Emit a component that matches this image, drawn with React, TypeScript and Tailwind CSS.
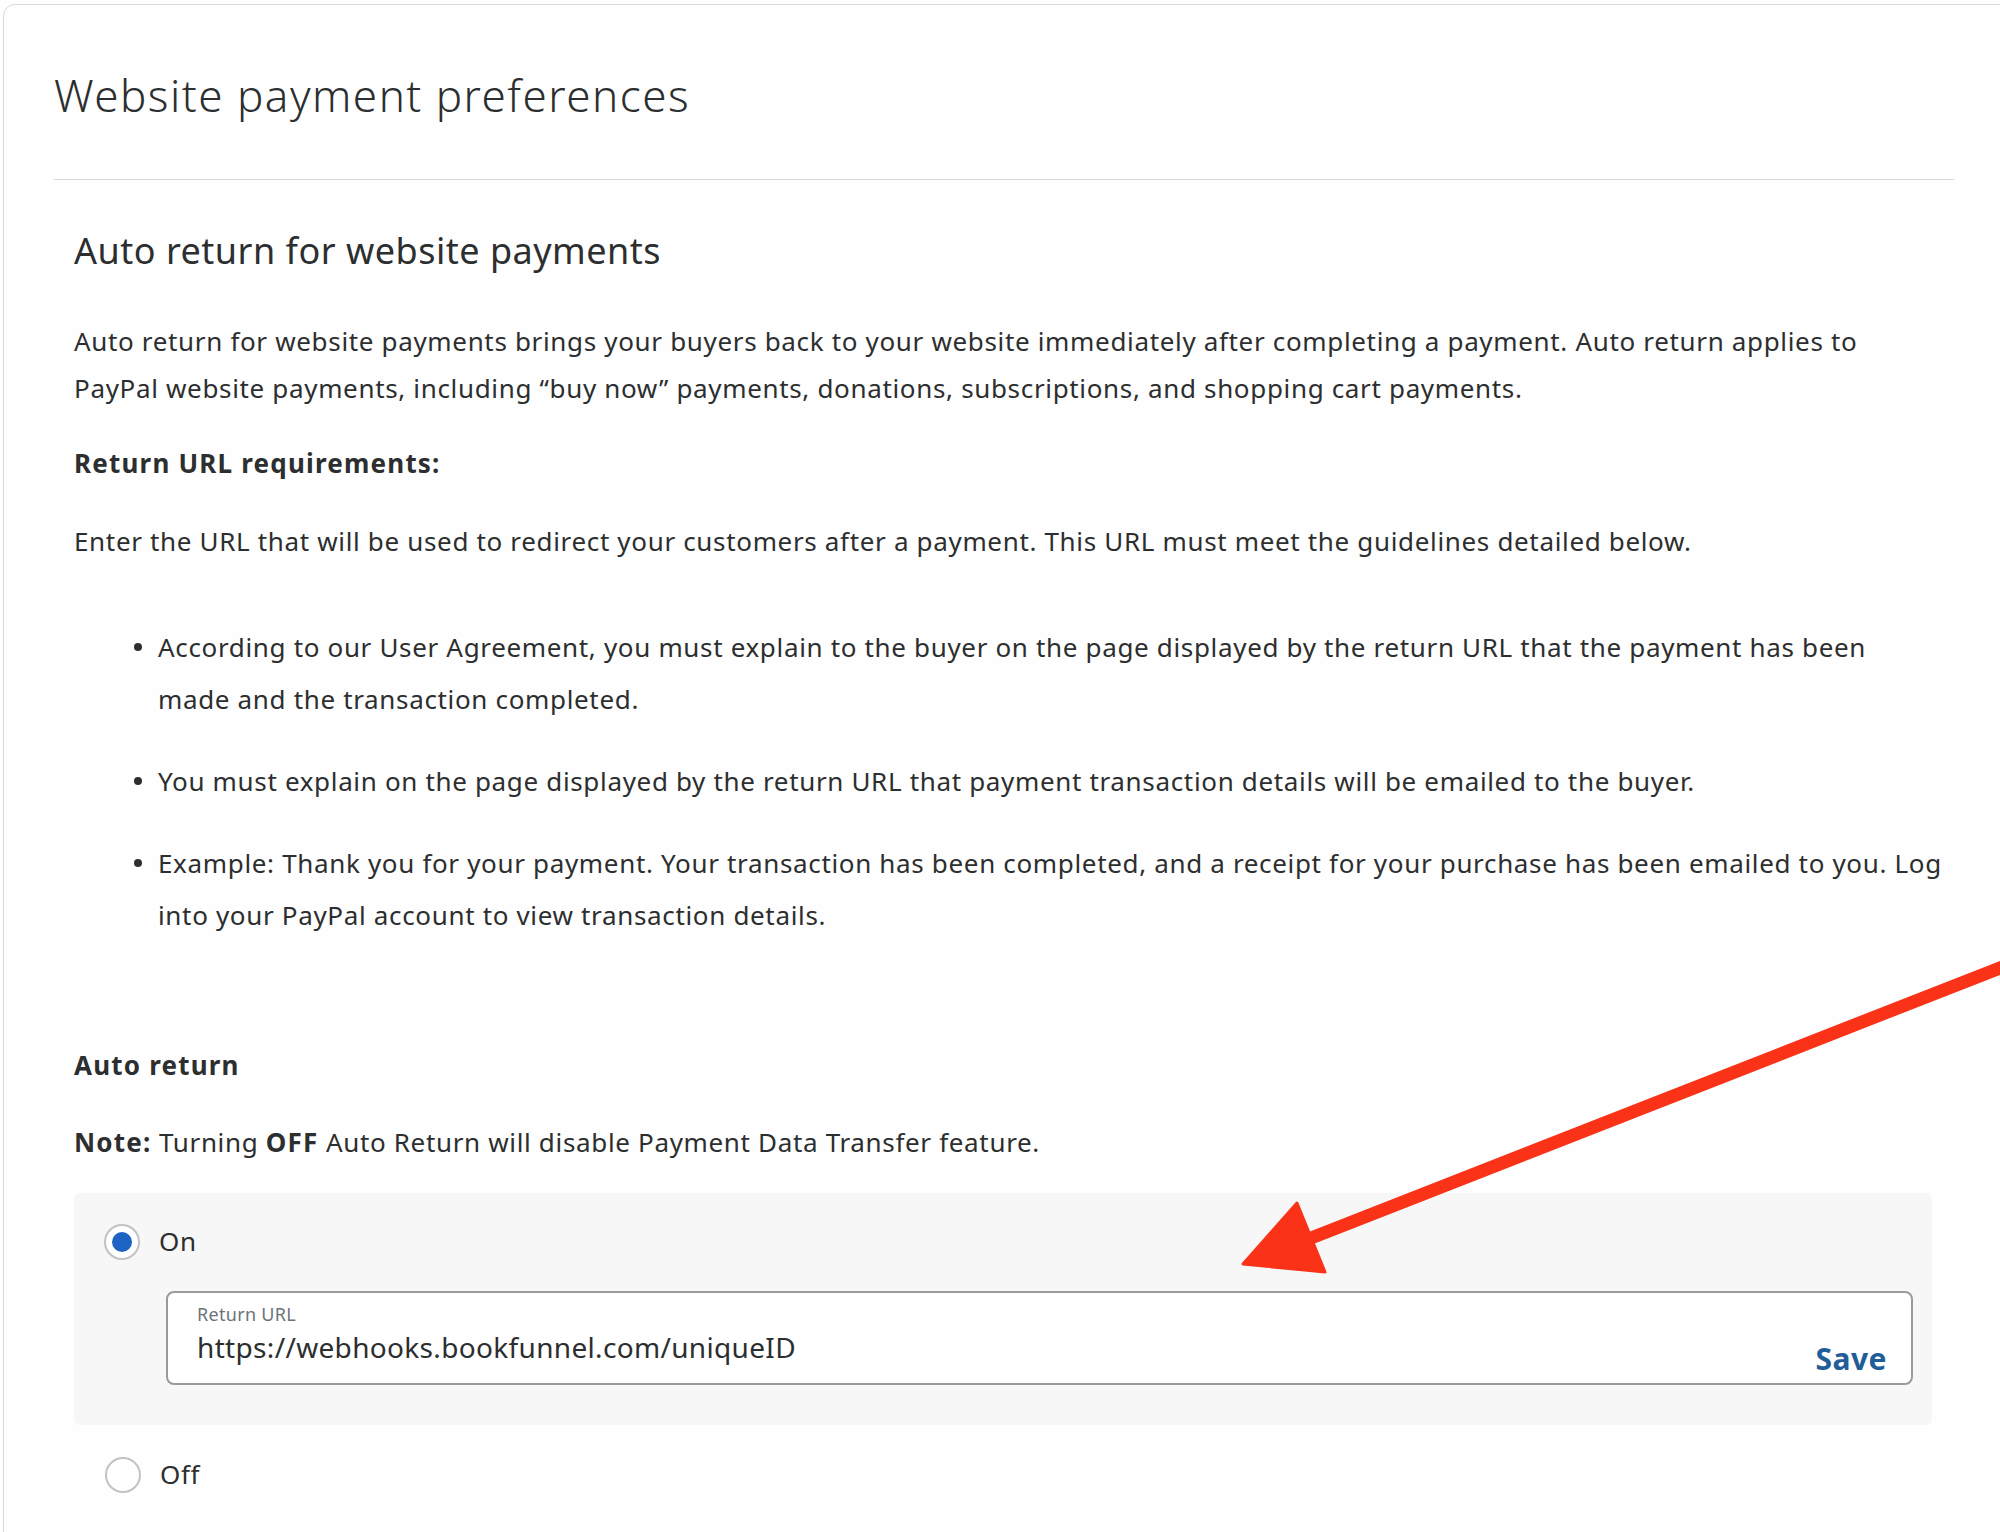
const body = "font-['Noto_Sans','Liberation_Sans',sans-serif] text-[26px] leading-[47px] tracking-[0.66px] text-[#2c2e2f]";

function Radio({ checked }: { checked: boolean }) {
  return (
    <span className="flex h-[36px] w-[36px] shrink-0 items-center justify-center rounded-full border-2 border-[#c2c2c2] bg-white">
      {checked && <span className="h-[20px] w-[20px] rounded-full bg-[#1d63c3]" />}
    </span>
  );
}

function Arrow() {
  return (
    <svg className="pointer-events-none absolute inset-0" width="2000" height="1532" viewBox="0 0 2000 1532">
      <line x1="2010" y1="964" x2="1306" y2="1240" stroke="#fa3218" strokeWidth="13" strokeLinecap="round" />
      <polygon points="1243,1264 1297,1203 1325,1272" fill="#fa3218" strokeLinejoin="round" stroke="#fa3218" strokeWidth="3" />
    </svg>
  );
}

function App() {
  return (
    <div className="relative h-[1532px] w-[2000px] overflow-hidden bg-[#fefefe]">
      <div className="ml-[3px] mt-[4px] h-[1600px] w-[2100px] rounded-tl-[12px] border border-[#dadada] bg-[#fefefe] pl-[50px] pt-[64px]">
        <h1 className="font-['Noto_Sans','Liberation_Sans',sans-serif] text-[44px] leading-[53px] font-light tracking-[1.5px] text-[#2c2e2f]">
          Website payment preferences
        </h1>
        <hr className="mt-[57px] w-[1900px] border-t border-[#d6d6d6]" />

        <section className="w-[1878px] pl-[20px]">
          <h2 className="mt-[49px] font-['Noto_Sans','Liberation_Sans',sans-serif] text-[36px] leading-[44px] tracking-[0.5px] text-[#2c2e2f]">
            Auto return for website payments
          </h2>

          <p className={`mt-[45px] whitespace-nowrap ${body}`}>
            Auto return for website payments brings your buyers back to your website immediately after completing a payment. Auto return applies to
            <br />
            PayPal website payments, including “buy now” payments, donations, subscriptions, and shopping cart payments.
          </p>

          <p className={`mt-[28px] font-bold tracking-[1.2px] ${body}`}>Return URL requirements:</p>

          <p className={`mt-[31px] whitespace-nowrap ${body}`}>
            Enter the URL that will be used to redirect your customers after a payment. This URL must meet the guidelines detailed below.
          </p>

          <ul className={`mt-[56px] flex flex-col gap-[30px] pl-[84px] ${body} leading-[52px]`}>
            <li className="relative whitespace-nowrap">
              <span className="absolute left-[-24px] top-[22px] h-[8px] w-[8px] rounded-full bg-[#2c2e2f]" />
              According to our User Agreement, you must explain to the buyer on the page displayed by the return URL that the payment has been
              <br />
              made and the transaction completed.
            </li>
            <li className="relative whitespace-nowrap">
              <span className="absolute left-[-24px] top-[22px] h-[8px] w-[8px] rounded-full bg-[#2c2e2f]" />
              You must explain on the page displayed by the return URL that payment transaction details will be emailed to the buyer.
            </li>
            <li className="relative whitespace-nowrap">
              <span className="absolute left-[-24px] top-[22px] h-[8px] w-[8px] rounded-full bg-[#2c2e2f]" />
              Example: Thank you for your payment. Your transaction has been completed, and a receipt for your purchase has been emailed to you. Log
              <br />
              into your PayPal account to view transaction details.
            </li>
          </ul>

          <p className={`mt-[101px] font-bold tracking-[1.2px] ${body}`}>Auto return</p>

          <p className={`mt-[30px] ${body}`}>
            <span className="font-bold tracking-[1.2px]">Note:</span> Turning <span className="font-bold tracking-[1.2px]">OFF</span> Auto Return will
            disable Payment Data Transfer feature.
          </p>

          <div className="mt-[27px] rounded-[6px] bg-[#f7f7f7] pb-[40px] pl-[30px] pr-[19px] pt-[25px]">
            <label className={`flex items-center gap-[19px] ${body}`}>
              <Radio checked />
              <span>On</span>
            </label>

            <div className="ml-[62px] mt-[26px] flex h-[94px] items-end justify-between rounded-[8px] border-2 border-[#9a9a9a] bg-white pb-[6px] pl-[29px] pr-[24px] pt-[10px]">
              <div className="flex h-full flex-col">
                <span className="font-['Noto_Sans','Liberation_Sans',sans-serif] text-[18px] leading-[22px] tracking-[0.3px] text-[#6c7378]">
                  Return URL
                </span>
                <span className="mt-[5px] font-['Noto_Sans','Liberation_Sans',sans-serif] text-[28px] leading-[34px] tracking-[0.33px] text-[#2c2e2f]">
                  https://webhooks.bookfunnel.com/uniqueID
                </span>
              </div>
              <button className="font-['Noto_Sans','Liberation_Sans',sans-serif] text-[30px] leading-[36px] font-bold tracking-[0.5px] text-[#1f5e98]">
                Save
              </button>
            </div>
          </div>

          <label className={`ml-[31px] mt-[26px] flex items-center gap-[19px] ${body}`}>
            <Radio checked={false} />
            <span>Off</span>
          </label>
        </section>
      </div>
      <Arrow />
    </div>
  );
}

export default App;
